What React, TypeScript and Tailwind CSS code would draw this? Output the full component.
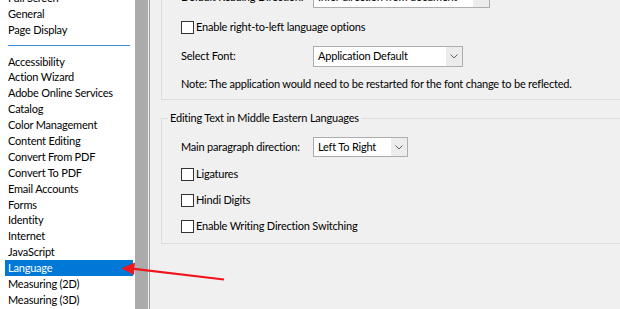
const categories: (string | null)[] = [
  "Full Screen",
  "General",
  "Page Display",
  null,
  "Accessibility",
  "Action Wizard",
  "Adobe Online Services",
  "Catalog",
  "Color Management",
  "Content Editing",
  "Convert From PDF",
  "Convert To PDF",
  "Email Accounts",
  "Forms",
  "Identity",
  "Internet",
  "JavaScript",
  "Language",
  "Measuring (2D)",
  "Measuring (3D)",
];

function Chevron() {
  return (
    <svg width="8" height="5" viewBox="0 0 8 5" fill="none">
      <path d="M0.5 0.5 L4 4 L7.5 0.5" stroke="#606060" strokeWidth="1" />
    </svg>
  );
}

function Dropdown({ value, className }: { value: string; className: string }) {
  return (
    <div className={`flex h-full border border-[#adadad] bg-white ${className}`}>
      <div className="flex-1 flex items-center pl-[4px] whitespace-nowrap overflow-hidden">{value}</div>
      <div className="w-[16px] bg-[#ececec] flex items-center justify-center">
        <Chevron />
      </div>
    </div>
  );
}

function Check({ label, className = "" }: { label: string; className?: string }) {
  return (
    <div className={`flex items-center h-[13px] ${className}`}>
      <span className="w-[13px] h-[13px] border border-[#333333] bg-white shrink-0" />
      <span className="ml-[2px] whitespace-nowrap">{label}</span>
    </div>
  );
}

export default function App() {
  return (
    <div className="relative w-[620px] h-[309px] overflow-hidden flex bg-[#f0f0f0] font-['Lato',sans-serif] text-[11px] tracking-[-0.2px] text-black">
      {/* category list */}
      <div className="w-[135px] bg-white shrink-0">
        <ul className="mt-[-10px]">
          {categories.map((c, i) =>
            c === null ? (
              <li key={i} className="h-[15.9px] flex items-center ml-[5px] mr-[2px] pl-[3px]">
                <div className="h-px w-[122px] bg-[#3a8ee0]" />
              </li>
            ) : (
              <li
                key={i}
                className={`h-[15.9px] leading-[15.9px] ml-[5px] mr-[2px] pl-[3px] whitespace-nowrap ${
                  c === "Language" ? "bg-[#0078d7] text-white" : ""
                }`}
              >
                {c}
              </li>
            )
          )}
        </ul>
      </div>
      <div className="w-[13px] bg-[#ababab] shrink-0" />
      <div className="w-px bg-[#f0f0f0] shrink-0" />
      <div className="w-px bg-[#a0a0a0] shrink-0" />

      {/* settings panel */}
      <div className="flex-1 pl-[11px] overflow-hidden">
        <div className="mt-[-40px] w-[480px] border border-[#dcdcdc] pt-[26px] pl-[19px] pb-[7px]">
          <div className="flex items-center h-[21px]">
            <span className="w-[132px] whitespace-nowrap">Default Reading Direction:</span>
            <Dropdown value="Infer direction from document" className="w-[177px]" />
          </div>
          <Check label="Enable right-to-left language options" className="mt-[13px]" />
          <div className="flex items-center h-[21px] mt-[12px]">
            <span className="w-[132px]">Select Font:</span>
            <Dropdown value="Application Default" className="w-[150px]" />
          </div>
          <p className="mt-[9px] leading-[16px] whitespace-nowrap">
            Note: The application would need to be restarted for the font change to be reflected.
          </p>
        </div>

        <fieldset className="mt-[10px] w-[480px] border border-[#dcdcdc] pt-[11px] pl-[19px] pb-[10px]">
          <legend className="ml-[-13px] px-[2px] leading-[16px]">Editing Text in Middle Eastern Languages</legend>
          <div className="flex items-center h-[20px]">
            <span className="w-[132px] whitespace-nowrap">Main paragraph direction:</span>
            <Dropdown value="Left To Right" className="w-[95px]" />
          </div>
          <Check label="Ligatures" className="mt-[11px]" />
          <Check label="Hindi Digits" className="mt-[13px]" />
          <Check label="Enable Writing Direction Switching" className="mt-[13px]" />
        </fieldset>
      </div>

      {/* annotation arrow */}
      <svg className="absolute inset-0 pointer-events-none" width="620" height="309" viewBox="0 0 620 309">
        <line x1="224" y1="279.5" x2="132" y2="268.6" stroke="#f0141c" strokeWidth="2.2" />
        <polygon points="121.5,268.3 135,262.5 134,275" fill="#f0141c" />
      </svg>
    </div>
  );
}
